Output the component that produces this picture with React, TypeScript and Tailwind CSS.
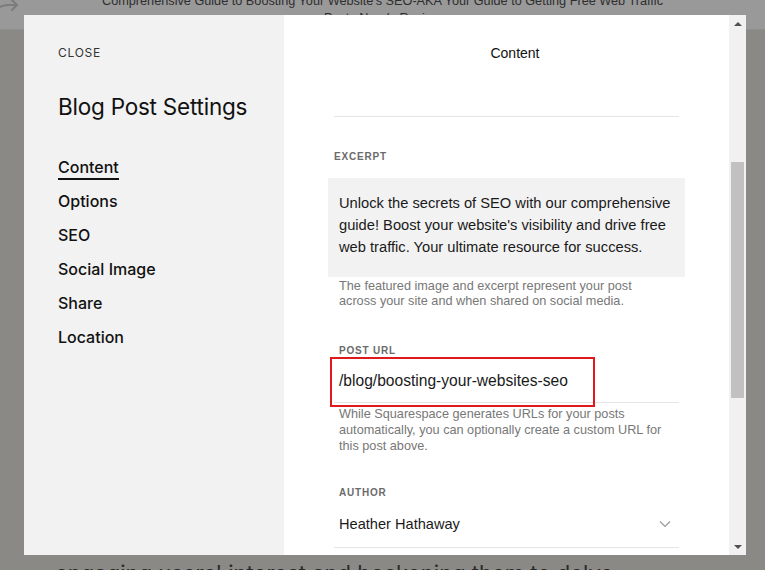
import React from "react";

const nav = ["Content", "Options", "SEO", "Social Image", "Share", "Location"];

function Chevron() {
  return (
    <svg width="14" height="14" viewBox="0 0 14 14" fill="none">
      <path d="M2 4.5 L7 9.5 L12 4.5" stroke="#9a9a9a" strokeWidth="1.2" />
    </svg>
  );
}

function RedoIcon() {
  return (
    <svg width="24" height="24" viewBox="0 0 24 24" fill="none">
      <path d="M-2 18 C0 12 6 9 12 9 L21 9" stroke="#7c7c7c" strokeWidth="2" strokeLinecap="round" />
      <path d="M16 4 L21 9 L16 14" stroke="#7c7c7c" strokeWidth="2" strokeLinecap="round" strokeLinejoin="round" />
    </svg>
  );
}

export default function App() {
  return (
    <div
      className="relative w-[765px] h-[570px] overflow-hidden bg-[#8a8985]"
      style={{ fontFamily: "'Liberation Sans', Arial, sans-serif" }}
    >
      {/* background page header */}
      <div className="h-[37px] bg-[#999999] border-b border-[#8f8f8f] relative">
        <div className="absolute left-[-4px] top-[3px]">
          <RedoIcon />
        </div>
        <div className="text-center text-[12.7px] leading-[17px] text-[#2e2e2e] mt-[-7px]">
          <div>Comprehensive Guide to Boosting Your Website's SEO-AKA Your Guide to Getting Free Web Traffic</div>
          <div>Posts Needs Review</div>
        </div>
      </div>
      {/* background page body text */}
      <div className="absolute left-[55px] top-[559px] text-[22px] leading-[28px] text-[#2a2a2a] whitespace-nowrap" style={{ fontFamily: "Inter, sans-serif" }}>
        engaging users' interest and beckoning them to delve
      </div>

      {/* modal */}
      <div className="absolute left-[24px] top-[15px] w-[722px] h-[540px] flex bg-white">
        {/* left panel */}
        <div className="w-[260px] h-full bg-[#f2f2f2] pl-[34px] pt-[30px]" style={{ fontFamily: "Inter, sans-serif" }}>
          <div className="text-[12px] leading-[16px] tracking-[0.06em] text-[#333]">CLOSE</div>
          <div className="mt-[32px] text-[22.5px] leading-[28px] text-[#111] tracking-[-0.01em]">Blog Post Settings</div>
          <div className="mt-[36px] flex flex-col items-start gap-[14px]">
            {nav.map((n, i) => (
              <div
                key={n}
                className={
                  "text-[16px] leading-[20px] font-medium text-[#111] " +
                  (i === 0 ? "border-b-2 border-[#111] pb-[1px] mb-[-3px]" : "")
                }
              >
                {n}
              </div>
            ))}
          </div>
        </div>

        {/* right panel */}
        <div className="flex-1 h-full relative">
          <div className="text-center text-[14px] leading-[20px] text-[#111] pt-[28px] mr-[-17px] relative">Content</div>
          <div className="ml-[50px] mr-[50px] mt-[53px] border-t border-[#e5e5e5]" />
          <div className="ml-[50px] mr-[50px] mt-[34px]">
            <div className="text-[10px] leading-[12px] font-bold tracking-[0.08em] text-[#6b6b6b]">EXCERPT</div>
            <div className="mt-[15px] mx-[-6px] bg-[#f2f2f2] px-[11px] pt-[14px] pb-[19px] text-[14.7px] leading-[22px] text-[#1a1a1a]">
              Unlock the secrets of SEO with our comprehensive guide! Boost your website's visibility and drive free web traffic. Your ultimate resource for success.
            </div>
            <div className="mt-[2px] pl-[5px] text-[12.7px] leading-[15px] text-[#777]">
              The featured image and excerpt represent your post<br />across your site and when shared on social media.
            </div>

            <div className="mt-[36px] pl-[5px] text-[10px] leading-[12px] font-bold tracking-[0.08em] text-[#6b6b6b]">POST URL</div>
            <div className="relative mt-[2px] border-b border-[#e5e5e5] h-[44px]">
              <div className="absolute left-[-4px] top-[-2px] w-[265px] h-[50px] border-2 border-[#e0191f]" />
              <div className="pl-[5px] pt-[12px] text-[15.6px] leading-[20px] text-[#1a1a1a]">/blog/boosting-your-websites-seo</div>
            </div>
            <div className="mt-[3px] pl-[5px] text-[12.7px] leading-[16px] text-[#777]">
              While Squarespace generates URLs for your posts<br />automatically, you can optionally create a custom URL for<br />this post above.
            </div>

            <div className="mt-[33px] pl-[5px] text-[10px] leading-[12px] font-bold tracking-[0.08em] text-[#6b6b6b]">AUTHOR</div>
            <div className="mt-[15px] flex items-center justify-between pl-[5px] pr-[7px] pb-[13px] border-b border-[#e5e5e5]">
              <span className="text-[14.6px] leading-[20px] text-[#1a1a1a]">Heather Hathaway</span>
              <Chevron />
            </div>
          </div>
        </div>

        {/* scrollbar */}
        <div className="w-[17px] h-full bg-[#f1f1f1] flex flex-col items-center">
          <div className="h-[17px] flex items-center justify-center">
            <div className="w-0 h-0 border-l-[4px] border-r-[4px] border-b-[4px] border-l-transparent border-r-transparent border-b-[#505050]" />
          </div>
          <div className="mt-[130px] w-[13px] h-[236px] bg-[#c1c1c1]" />
          <div className="flex-1" />
          <div className="h-[17px] flex items-center justify-center">
            <div className="w-0 h-0 border-l-[4px] border-r-[4px] border-t-[4px] border-l-transparent border-r-transparent border-t-[#505050]" />
          </div>
        </div>
      </div>
    </div>
  );
}
